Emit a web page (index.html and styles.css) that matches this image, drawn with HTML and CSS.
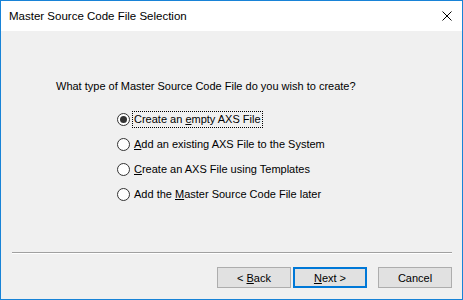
FILE: index.html
```html
<!DOCTYPE html>
<html>
	<head>
		<title>Master Source Code File Selection</title>
		<link rel="stylesheet" href="styles.css">
	</head>
	<body>
		<div class="window">
			<div class="titlebar">
				<span class="title">Master Source Code File Selection</span>
				<svg class="close" width="10" height="10" viewBox="0 0 10 10">
					<path d="M0.5 0.5 L9.5 9.5 M9.5 0.5 L0.5 9.5" stroke="#000" stroke-width="1" fill="none"/>
				</svg>
			</div>
			<div class="content">
				<p class="question">What type of Master Source Code File do you wish to create?</p>
				<div class="options">
					<label class="option checked"><span class="radio"></span><span class="text focus">Create an <u>e</u>mpty AXS File</span></label>
					<label class="option"><span class="radio"></span><span class="text"><u>A</u>dd an existing AXS File to the System</span></label>
					<label class="option"><span class="radio"></span><span class="text"><u>C</u>reate an AXS File using Templates</span></label>
					<label class="option"><span class="radio"></span><span class="text">Add the <u>M</u>aster Source Code File later</span></label>
				</div>
			</div>
			<div class="footer">
				<div class="separator"></div>
				<div class="buttons">
					<button class="btn">&lt; <u>B</u>ack</button>
					<button class="btn default"><u>N</u>ext &gt;</button>
					<button class="btn cancel">Cancel</button>
				</div>
			</div>
		</div>
	</body>
</html>
```

FILE: styles.css
```css
html, body {
	margin: 0;
	padding: 0;
}
body {
	font-family: "Liberation Sans", Arial, sans-serif;
	font-size: 11px;
	color: #000;
}
.window {
	box-sizing: border-box;
	width: 463px;
	height: 300px;
	border: 1px solid #1883d7;
	background-color: #f0f0f0;
	display: flex;
	flex-direction: column;
}
.titlebar {
	height: 30px;
	background-color: #fff;
	display: flex;
	align-items: center;
	justify-content: space-between;
	padding: 0 10px 0 8px;
}
.title {
	font-size: 11.5px;
	line-height: 16px;
}

.content {
	flex: 1;
	padding: 47px 0 0 55px;
}
.question {
	margin: 0 0 13px 0;
	line-height: 16px;
}
.options {
	padding-left: 61px;
}
.option {
	display: flex;
	align-items: center;
	height: 25px;
}
.radio {
	box-sizing: border-box;
	width: 13px;
	height: 13px;
	border: 1px solid #333;
	border-radius: 50%;
	background-color: #fff;
	display: flex;
	align-items: center;
	justify-content: center;
	margin-right: 2px;
}
.option.checked .radio:after {
	content: "";
	width: 7px;
	height: 7px;
	border-radius: 50%;
	background-color: #333;
}
.text {
	line-height: 15px;
	padding: 0 1px;
	border: 1px dotted transparent;
}
.text.focus {
	border-color: #000;
}

.footer {
	height: 47px;
}
.separator {
	height: 1px;
	margin: 0 10px 0 11px;
	background-color: #a0a0a0;
	border-bottom: 1px solid #fff;
}
.buttons {
	display: flex;
	justify-content: flex-end;
	margin: 13px 10px 0 0;
	gap: 2px;
}
.btn {
	box-sizing: border-box;
	width: 74px;
	height: 21px;
	padding: 0;
	font-family: inherit;
	font-size: 11px;
	color: #000;
	background-color: #e1e1e1;
	border: 1px solid #adadad;
}
.btn.default {
	border: 2px solid #0078d7;
}
.btn.cancel {
	margin-left: 9px;
}
```
